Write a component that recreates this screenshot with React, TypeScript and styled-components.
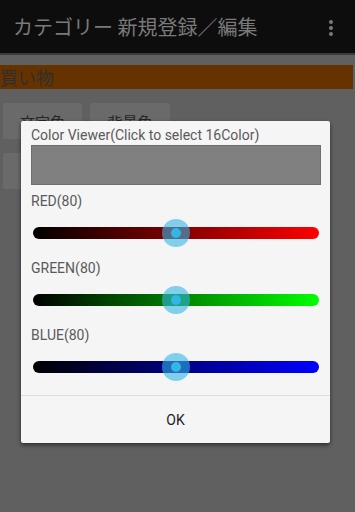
import React from "react";
import styled, { createGlobalStyle } from "styled-components";

const Global = createGlobalStyle`
  html, body { margin: 0; padding: 0; }
  body { width: 355px; height: 512px; overflow: hidden; background: #606060; font-family: Roboto, "Noto Sans CJK JP", sans-serif; }
`;

const Screen = styled.div`
  position: relative;
  width: 355px;
  height: 512px;
  background: #606060;
  overflow: hidden;
`;

const ActionBar = styled.div`
  height: 53px;
  background: #0d0d0d;
  border-bottom: 2px solid #3a3a3a;
  display: flex;
  align-items: center;
  justify-content: space-between;
  padding: 0 0 0 13px;
`;

const Title = styled.div`
  font-family: "Noto Sans CJK JP", sans-serif;
  font-size: 20px;
  color: #7a7a7a;
`;

const Overflow = styled.div`
  width: 48px;
  display: flex;
  flex-direction: column;
  align-items: center;
  gap: 2px;
  padding-top: 2px;
`;

const Dot = styled.span`
  width: 4px;
  height: 4px;
  border-radius: 50%;
  background: #7a7a7a;
`;

const Content = styled.div`
  padding-top: 10px;
`;

const CategoryBar = styled.div`
  height: 24px;
  width: 353px;
  background: #663300;
  display: flex;
  align-items: center;
  font-family: "Noto Sans CJK JP", sans-serif;
  font-size: 18px;
  color: #2e2e2e;
  line-height: 24px;
`;

const ButtonRow = styled.div`
  display: flex;
  gap: 8px;
  padding: 0 3px;
  margin-top: 14px;
`;

const BgButton = styled.div<{ $w: number }>`
  width: ${(p) => p.$w}px;
  height: 36px;
  background: #6a6a6a;
  border-radius: 2px;
  display: flex;
  align-items: center;
  justify-content: center;
  font-family: "Noto Sans CJK JP", sans-serif;
  font-size: 15px;
  color: #262626;
`;

const Dialog = styled.div`
  position: absolute;
  left: 21px;
  top: 121px;
  width: 309px;
  background: #f5f5f5;
  border-radius: 2px;
  box-shadow: 0 2px 4px rgba(0, 0, 0, 0.55);
  display: flex;
  flex-direction: column;
`;

const Body = styled.div`
  padding: 5px 9px 0 10px;
  display: flex;
  flex-direction: column;
`;

const Label = styled.div`
  font-family: Roboto, sans-serif;
  font-size: 14px;
  color: #5a5a5a;
  line-height: 18px;
`;

const Viewer = styled.div`
  margin-top: 1px;
  margin-bottom: 7px;
  height: 38px;
  background: #808080;
  border: 1px solid #6e6e6e;
`;

const SliderBox = styled.div`
  position: relative;
  height: 49px;
  box-sizing: border-box;
  display: flex;
  align-items: flex-start;
  padding: 17px 2px 0;
`;

const Track = styled.div<{ $to: string }>`
  flex: 1;
  height: 12px;
  border-radius: 6px;
  background: linear-gradient(to right, #000000, ${(p) => p.$to});
`;

const Thumb = styled.div`
  position: absolute;
  left: 131px;
  top: 9px;
  width: 28px;
  height: 28px;
  border-radius: 50%;
  background: rgba(51, 181, 229, 0.6);
  display: flex;
  align-items: center;
  justify-content: center;
`;

const ThumbCore = styled.div`
  width: 10px;
  height: 10px;
  border-radius: 50%;
  background: #33b5e5;
`;

const Footer = styled.div`
  margin-top: 2px;
  border-top: 1px solid #dedede;
  height: 47px;
  display: flex;
  align-items: center;
  justify-content: center;
  font-family: Roboto, sans-serif;
  font-size: 14px;
  color: #222;
`;

const sliders = [
  { name: "RED", value: 80, to: "#ff0000" },
  { name: "GREEN", value: 80, to: "#00ff00" },
  { name: "BLUE", value: 80, to: "#0000ff" },
];

export default function App() {
  return (
    <Screen>
      <Global />
      <ActionBar>
        <Title>カテゴリー 新規登録／編集</Title>
        <Overflow>
          <Dot />
          <Dot />
          <Dot />
        </Overflow>
      </ActionBar>
      <Content>
        <CategoryBar>買い物</CategoryBar>
        <ButtonRow>
          <BgButton $w={79}>文字色</BgButton>
          <BgButton $w={80}>背景色</BgButton>
        </ButtonRow>
        <ButtonRow>
          <BgButton $w={79} />
        </ButtonRow>
      </Content>
      <Dialog>
        <Body>
          <Label>Color Viewer(Click to select 16Color)</Label>
          <Viewer />
          {sliders.map((s) => (
            <React.Fragment key={s.name}>
              <Label>
                {s.name}({s.value})
              </Label>
              <SliderBox>
                <Track $to={s.to} />
                <Thumb>
                  <ThumbCore />
                </Thumb>
              </SliderBox>
            </React.Fragment>
          ))}
        </Body>
        <Footer>OK</Footer>
      </Dialog>
    </Screen>
  );
}
